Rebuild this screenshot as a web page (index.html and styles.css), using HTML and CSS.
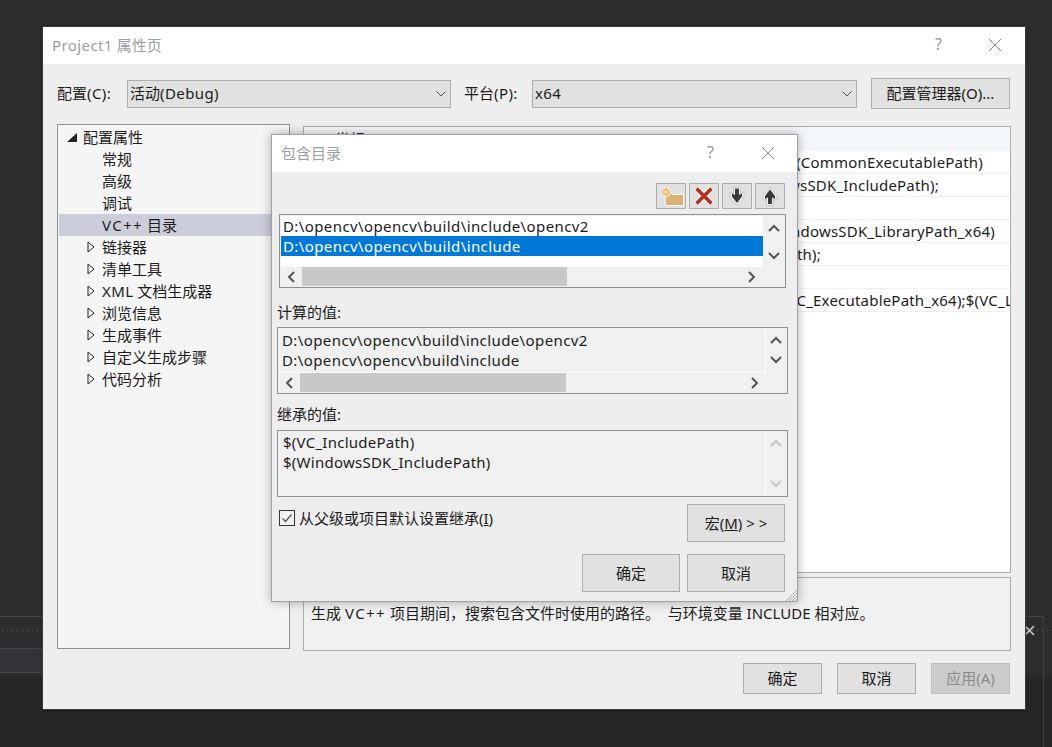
FILE: index.html
```html
<!DOCTYPE html>
<html lang="zh-CN">
<head>
<meta charset="utf-8">
<title>Project1 属性页</title>
<link rel="stylesheet" href="styles.css">
</head>
<body>
<div class="desk">
  <div class="desk-top"></div>
  <div class="strip strip-dots"><svg class="strip-x" width="11" height="11" viewBox="0 0 11 11"><path d="M1 1l9 9M10 1l-9 9" stroke="#c8c8c8" stroke-width="1.6" fill="none"/></svg></div>
  <div class="strip strip-plain"></div>
  <div class="strip-end"></div>
  <div class="desk-bottom"></div>

  <section class="window main-window">
    <header class="titlebar">
      <span class="title"><span class="la">Project1</span> 属性页</span>
      <span class="help">?</span>
      <svg class="close" width="14" height="14" viewBox="0 0 14 14"><path d="M1 1l12 12M13 1L1 13" stroke="#8c8c8c" stroke-width="1" fill="none"/></svg>
    </header>
    <div class="main-body">
      <div class="config-row">
        <label class="cfg-label cfg-label-a">配置<span class="la">(C):</span></label>
        <div class="combo combo-a"><span>活动<span class="la">(Debug)</span></span><svg width="10" height="6" viewBox="0 0 10 6"><path d="M0.5 0.5L5 5l4.500-4.500" stroke="#555" fill="none"/></svg></div>
        <label class="cfg-label cfg-label-b">平台<span class="la">(P):</span></label>
        <div class="combo combo-b"><span class="la">x64</span><svg width="10" height="6" viewBox="0 0 10 6"><path d="M0.5 0.5L5 5l4.500-4.500" stroke="#555" fill="none"/></svg></div>
        <button class="btn btn-manager">配置管理器(O)...</button>
      </div>
      <div class="panels">
        <nav class="tree">
          <div class="node lvl1"><svg class="tri" width="11" height="9" viewBox="0 0 11 9"><path d="M0 9L10 9 10 0z" fill="#222"/></svg>配置属性</div>
          <div class="node lvl2">常规</div>
          <div class="node lvl2">高级</div>
          <div class="node lvl2">调试</div>
          <div class="node lvl2 selected"><span class="wide">VC++</span>&nbsp;目录</div>
          <div class="node lvl2 has-arrow"><svg class="arrow" width="8" height="12" viewBox="0 0 8 12"><path d="M1 1l6 5-6 5z" fill="none" stroke="#222"/></svg>链接器</div>
          <div class="node lvl2 has-arrow"><svg class="arrow" width="8" height="12" viewBox="0 0 8 12"><path d="M1 1l6 5-6 5z" fill="none" stroke="#222"/></svg>清单工具</div>
          <div class="node lvl2 has-arrow"><svg class="arrow" width="8" height="12" viewBox="0 0 8 12"><path d="M1 1l6 5-6 5z" fill="none" stroke="#222"/></svg><span class="la">XML</span>&nbsp;文档生成器</div>
          <div class="node lvl2 has-arrow"><svg class="arrow" width="8" height="12" viewBox="0 0 8 12"><path d="M1 1l6 5-6 5z" fill="none" stroke="#222"/></svg>浏览信息</div>
          <div class="node lvl2 has-arrow"><svg class="arrow" width="8" height="12" viewBox="0 0 8 12"><path d="M1 1l6 5-6 5z" fill="none" stroke="#222"/></svg>生成事件</div>
          <div class="node lvl2 has-arrow"><svg class="arrow" width="8" height="12" viewBox="0 0 8 12"><path d="M1 1l6 5-6 5z" fill="none" stroke="#222"/></svg>自定义生成步骤</div>
          <div class="node lvl2 has-arrow"><svg class="arrow" width="8" height="12" viewBox="0 0 8 12"><path d="M1 1l6 5-6 5z" fill="none" stroke="#222"/></svg>代码分析</div>
        </nav>
        <div class="right-col">
          <div class="grid">
            <div class="grid-head"><span>常规</span></div>
            <div class="grid-row r1"><span>$(CommonExecutablePath)</span></div>
            <div class="grid-row r2"><span>$(WindowsSDK_IncludePath);</span></div>
            <div class="grid-row"></div>
            <div class="grid-row r4"><span>$(WindowsSDK_LibraryPath_x64)</span></div>
            <div class="grid-row r5"><span>$(VC_SourcePath);</span></div>
            <div class="grid-row"></div>
            <div class="grid-row r7"><span>$(VC_ExecutablePath_x64);$(VC_LibraryPath_x64)</span></div>
          </div>
          <div class="desc">生成 <span class="wide">VC++</span> 项目期间，搜索包含文件时使用的路径。&nbsp; 与环境变量 INCLUDE 相对应。</div>
        </div>
      </div>
      <footer class="main-footer">
        <button class="btn btn-foot">确定</button>
        <button class="btn btn-foot">取消</button>
        <button class="btn btn-foot disabled">应用(A)</button>
      </footer>
    </div>
  </section>

  <section class="window dialog">
    <header class="titlebar">
      <span class="title">包含目录</span>
      <span class="help">?</span>
      <svg class="close" width="14" height="14" viewBox="0 0 14 14"><path d="M1 1l12 12M13 1L1 13" stroke="#8c8c8c" stroke-width="1" fill="none"/></svg>
    </header>
    <div class="dlg-body">
      <div class="toolbar">
        <button class="tool" aria-label="新建行"><svg width="28" height="24" viewBox="0 0 28 24">
          <path d="M8 8h6l1 2h12v12H8z" fill="#f6f6f6"/>
          <path d="M9 9h5l1 2h11v10H9z" fill="#dcb274"/>
          <path d="M9 3v10M4 8h10M5.500 4.500l7 7M12.500 4.500l-7 7" stroke="#fff" stroke-width="3"/>
          <path d="M9 3.500v9M4.500 8h9M6 5l6 6M12 5l-6 6" stroke="#e6a24a" stroke-width="1.600"/>
          <circle cx="9" cy="8" r="1.800" fill="#fdeac0"/>
        </svg></button>
        <button class="tool" aria-label="删除行"><svg width="24" height="22" viewBox="0 0 24 22">
          <path d="M4 3l16 16M20 3L4 19" stroke="#f6f6f6" stroke-width="6"/>
          <path d="M4.500 3.500l15 15M19.500 3.500l-15 15" stroke="#b5301f" stroke-width="3.600"/>
        </svg></button>
        <button class="tool" aria-label="下移"><svg width="22" height="22" viewBox="0 0 22 22">
          <path d="M7.500 2h7v6.500L18 7v5l-7 8.500L4 12V7l3.500 1.500z" fill="#f4f4f4" stroke="#c4c4c4"/>
          <path d="M9 3.500h4v6.500l3-1.500V11.500L11 18 6 11.500V8.500L9 10z" fill="#3a3a3a"/>
        </svg></button>
        <button class="tool" aria-label="上移"><svg width="22" height="22" viewBox="0 0 22 22">
          <path d="M7.500 20.500h7V14L18 15.500v-5L11 2 4 10.500v5L7.500 14z" fill="#f4f4f4" stroke="#c4c4c4"/>
          <path d="M9 19h4v-6.500l3 1.500V11L11 4.500 6 11v3l3-1.500z" fill="#3a3a3a"/>
        </svg></button>
      </div>

      <div class="listbox edit">
        <div class="lines white">
          <div class="line la">D:\opencv\opencv\build\include\opencv2</div>
          <div class="line la sel">D:\opencv\opencv\build\include</div>
        </div>
        <div class="vbar vbar-edit">
          <svg width="12" height="8" viewBox="0 0 12 8"><path d="M1 7l5-5 5 5" class="chev"/></svg>
          <svg width="12" height="8" viewBox="0 0 12 8"><path d="M1 1l5 5 5-5" class="chev"/></svg>
        </div>
        <div class="hbar hbar-edit">
          <svg class="h-left" width="8" height="12" viewBox="0 0 8 12"><path d="M7 1L2 6l5 5" class="chev"/></svg>
          <div class="thumb"></div>
          <svg class="h-right" width="8" height="12" viewBox="0 0 8 12"><path d="M1 1l5 5-5 5" class="chev"/></svg>
        </div>
      </div>

      <div class="group-label label-computed">计算的值:</div>
      <div class="listbox computed">
        <div class="lines">
          <div class="line la">D:\opencv\opencv\build\include\opencv2</div>
          <div class="line la">D:\opencv\opencv\build\include</div>
        </div>
        <div class="vbar vbar-tight">
          <svg width="12" height="8" viewBox="0 0 12 8"><path d="M1 7l5-5 5 5" class="chev"/></svg>
          <svg width="12" height="8" viewBox="0 0 12 8"><path d="M1 1l5 5 5-5" class="chev"/></svg>
        </div>
        <div class="hbar hbar-computed">
          <svg class="h-left" width="8" height="12" viewBox="0 0 8 12"><path d="M7 1L2 6l5 5" class="chev"/></svg>
          <div class="thumb"></div>
          <svg class="h-right" width="8" height="12" viewBox="0 0 8 12"><path d="M1 1l5 5-5 5" class="chev"/></svg>
        </div>
      </div>

      <div class="group-label label-inherited">继承的值:</div>
      <div class="listbox inherited">
        <div class="lines">
          <div class="line">$(VC_IncludePath)</div>
          <div class="line">$(WindowsSDK_IncludePath)</div>
        </div>
        <div class="vbar vbar-full">
          <svg width="12" height="8" viewBox="0 0 12 8"><path d="M1 7l5-5 5 5" class="chev off"/></svg>
          <svg width="12" height="8" viewBox="0 0 12 8"><path d="M1 1l5 5 5-5" class="chev off"/></svg>
        </div>
      </div>

      <div class="dlg-bottom">
        <label class="inherit">
          <span class="check"><svg width="14" height="14" viewBox="0 0 14 14"><path d="M2.500 7.500l3 3 6-7" stroke="#555" stroke-width="1.300" fill="none"/></svg></span>
          <span>从父级或项目默认设置继承(<u>I</u>)</span>
        </label>
        <div class="dlg-actions">
          <button class="btn btn-dlg btn-macro">宏(<u>M</u>) &gt; &gt;</button>
          <div class="dlg-confirm">
            <button class="btn btn-dlg">确定</button>
            <button class="btn btn-dlg">取消</button>
          </div>
        </div>
      </div>
    </div>
    <svg class="grip" width="12" height="12" viewBox="0 0 12 12"><path d="M12 1L1 12M12 4L4 12M12 7L7 12M12 10L10 12" stroke="#a8a8a8" fill="none"/></svg>
  </section>
</div>
</body>
</html>
```

FILE: styles.css
```css
* { box-sizing: border-box; }
html, body { margin: 0; padding: 0; }
body {
  width: 1052px;
  height: 747px;
  overflow: hidden;
  background: #252526;
  font: 15px/20px "Noto Sans", "Noto Sans CJK SC", sans-serif;
  color: #1c1c1c;
}
.la { letter-spacing: .4px; }
.wide { letter-spacing: 1.4px; }
.desk {
  position: relative;
  width: 1052px;
  height: 747px;
  display: grid;
  grid-template-rows: 616px 32px 24px 5px 1fr;
  overflow: hidden;
}
.desk-top { background: #2c2c2e; }
.strip { display: flex; align-items: center; justify-content: flex-end; }
.strip-dots {
  background:
    linear-gradient(#454547, #454547) 0 0 / 1043px 1px no-repeat,
    radial-gradient(circle, #3e3e41 1px, transparent 1.2px) 0 12px / 5px 5px repeat-x,
    #2d2d30;
  padding: 0 17px 4px 0;
}
.strip-plain {
  background:
    linear-gradient(#454547, #454547) 0 0 / 43px 1px no-repeat,
    linear-gradient(#333337, #333337) 0 0 / 43px 100% no-repeat,
    #2d2d30;
}
.strip-end {
  background:
    linear-gradient(#454547, #454547) 0 0 / 43px 1px no-repeat,
    #2a2a2c;
}
.desk-bottom { background: #252526; }
.desk::after {
  content: "";
  position: absolute;
  left: 1043px;
  top: 616px;
  bottom: 0;
  width: 1px;
  background: #3e3e40;
}

.window { position: absolute; background: #eeeeee; z-index: 1; }
.main-window {
  left: 43px; top: 27px; width: 982px; height: 682px;
  box-shadow: 0 0 0 1px #3a3a3a, 0 1px 3px rgba(0,0,0,.5);
}
.dialog {
  left: 271px; top: 134px; width: 527px; height: 468px;
  border: 1px solid #a0a0a0;
  box-shadow: 0 0 10px rgba(0,0,0,.3);
  z-index: 2;
}

.titlebar {
  height: 37px;
  background: #fff;
  display: flex;
  align-items: center;
  padding-left: 9px;
  color: #9a9ea6;
}
.title { flex: 1; padding-bottom: 2px; }
.close { margin-bottom: 2px; }
.main-window .help { margin-right: 46px; }
.main-window .close { margin-right: 23px; }
.dialog .help { margin-right: 47px; }
.dialog .close { margin-right: 22px; }
.help { font-size: 16px; color: #9a9a9a; padding-bottom: 3px; }

.main-body { padding: 14px 14px 0 14px; }
.config-row { display: flex; align-items: center; height: 31px; }
.cfg-label { padding-bottom: 2px; }
.cfg-label-a { width: 70px; }
.cfg-label-b { width: 68px; margin-left: 13px; }
.combo {
  height: 28px;
  background: #e1e1e1;
  border: 1px solid #adadad;
  display: flex;
  align-items: center;
  justify-content: space-between;
  padding: 0 4px 2px 2px;
}
.combo svg { margin-top: 2px; }
.combo-a { width: 324px; }
.combo-b { width: 325px; }
.btn {
  font: inherit;
  color: inherit;
  background: #e1e1e1;
  border: 1px solid #adadad;
  padding: 0;
  border-radius: 0;
}
.btn-manager { width: 139px; height: 31px; margin-left: 14px; padding-bottom: 2px; }
.panels { display: flex; margin-top: 15px; height: 527px; }
.tree {
  width: 233px;
  height: 525px;
  background: #f5f5f5;
  border: 1px solid #8f8f96;
  padding: 1px;
  margin-right: 13px;
}
.node { height: 22px; display: flex; align-items: center; white-space: nowrap; }
.lvl1 { padding-left: 8px; }
.tri { margin-right: 5px; }
.lvl2 { padding-left: 43px; }
.has-arrow { padding-left: 28px; }
.arrow { margin-right: 7px; }
.selected { background: #cbcdd9; }
.right-col { width: 708px; margin-top: 2px; }
.grid {
  height: 447px;
  background: #fff;
  border: 1px solid #adadad;
  overflow: hidden;
}
.grid-head { height: 24px; background: #f3f6fa; padding: 2px 0 0 31px; }
.grid-row {
  height: 23px;
  border-bottom: 1px solid #f0f0f0;
  display: flex;
  justify-content: flex-end;
  align-items: center;
  white-space: nowrap;
  letter-spacing: .2px;
}
.grid-row span { flex: none; }
.r1 { padding-right: 27px; }
.r2 { padding-right: 71px; }
.r4 { padding-right: 15px; }
.r5 { padding-right: 189px; }
.r7 { justify-content: flex-start; padding-left: 470px; }
.desc {
  height: 74px;
  margin-top: 4px;
  background: #f0f0f0;
  border: 1px solid #adadad;
  padding: 25px 0 0 7px;
}
.main-footer {
  display: flex;
  justify-content: flex-end;
  gap: 15px;
  margin: 12px 1px 0 0;
}
.btn-foot { width: 79px; height: 31px; padding-bottom: 2px; }
.disabled { background: #cccccc; border-color: #bfbfbf; color: #8a8a8a; }

.dlg-body { padding: 11px 9px 0 5px; }
.toolbar { display: flex; justify-content: flex-end; gap: 3px; margin-right: 3px; }
.tool {
  width: 30px;
  height: 26px;
  background: #e1e1e1;
  border: 1px solid #adadad;
  padding: 0;
  display: flex;
  align-items: center;
  justify-content: center;
}
.listbox {
  border: 1px solid #8f8f96;
  display: grid;
  background: #f0f0f0;
  overflow: hidden;
}
.edit {
  width: 507px;
  height: 74px;
  margin: 5px 0 0 2px;
  grid-template-columns: 482px 1fr;
  grid-template-rows: 51px 1fr;
  padding: 1px;
}
.computed {
  width: 511px;
  height: 67px;
  grid-template-columns: 487px 1fr;
  grid-template-rows: 44px 1fr;
  padding: 1px;
}
.inherited {
  width: 511px;
  height: 67px;
  grid-template-columns: 487px 1fr;
  padding: 1px;
}
.white { background: #fff; }
.computed .lines, .inherited .lines { padding: 1px 0 0 1px; border-right: 1px solid #fff; }
.inherited .lines { padding: 0 0 0 2px; letter-spacing: .25px; }
.computed .lines { border-bottom: 1px solid #fff; }
.line { height: 20px; line-height: 20px; padding-left: 2px; white-space: nowrap; }
.sel { background: #0078d7; color: #fff; }
.vbar { display: flex; flex-direction: column; align-items: center; }
.vbar-edit { justify-content: space-between; padding: 8px 0 7px; }
.vbar-tight { justify-content: space-between; padding: 7px 0 9px; }
.vbar-full { justify-content: space-between; padding: 7px 0 7px; }
.hbar {
  grid-column: 1 / 2;
  display: flex;
  align-items: center;
}
.h-left { margin: 0 7px 0 6px; }
.thumb { height: 19px; background: #c8c8c8; }
.h-right { margin-left: auto; }
.hbar-edit .thumb { width: 265px; }
.hbar-edit .h-right { margin-right: 7px; }
.hbar-computed .thumb { width: 266px; }
.hbar-computed .h-right { margin-right: 7px; }
.chev { fill: none; stroke: #555; stroke-width: 2; }
.chev.off { stroke: #c8c8c8; }
.group-label { height: 20px; }
.label-computed { margin: 14px 0 5px; }
.label-inherited { margin: 10px 0 6px; }
.dlg-bottom { display: flex; justify-content: space-between; margin-top: 7px; }
.inherit { display: flex; align-items: center; gap: 4px; height: 20px; margin: 4px 0 0 2px; white-space: nowrap; }
.check {
  width: 16px;
  height: 16px;
  background: #f2f2f2;
  border: 1px solid #333;
  display: flex;
}
.dlg-actions { display: flex; flex-direction: column; align-items: flex-end; margin-right: 3px; }
.btn-dlg { width: 98px; height: 38px; }
.dlg-confirm { display: flex; gap: 7px; margin-top: 12px; }
.grip { position: absolute; right: 0; bottom: 0; }
```
